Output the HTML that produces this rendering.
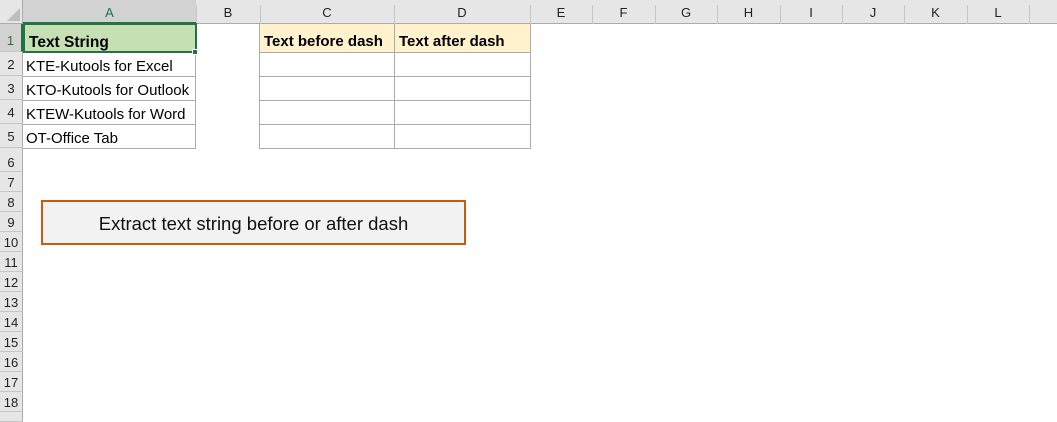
<!DOCTYPE html><html><head><style>
body{margin:0;width:1057px;height:413px;background:#fff;position:relative;overflow:hidden;font-family:"Liberation Sans",Arial,sans-serif}
.a{position:absolute;box-sizing:border-box}
.ch{top:0;height:24px;background:#e6e6e6;border-bottom:1px solid #ababab;font-size:13px;color:#222;text-align:center;line-height:26px}
.sep{position:absolute;top:5px;width:1px;height:19px;background:#c6c6c6}
.rh{left:0;width:23px;background:#e6e6e6;border-right:1px solid #ababab;border-bottom:1px solid #c6c6c6;font-size:13px;color:#222;text-align:center}
.c{border:1px solid #ababab;font-size:15px;padding-left:3px;white-space:nowrap}
</style></head><body>
<div class="a ch" style="left:0;width:1057px"></div>
<div class="a" style="left:0;top:0;width:23px;height:24px;background:#e6e6e6;border-right:1px solid #ababab;border-bottom:1px solid #ababab"></div>
<svg class="a" style="left:7px;top:8px" width="14" height="14"><polygon points="13,0 13,13 0,13" fill="#bdbdbd"/></svg>
<div class="a ch" style="left:23px;width:173px;background:#d2d2d2;color:#217346;border-bottom:2px solid #217346">A</div>
<div class="a ch" style="left:196px;width:64px;background:transparent;border:none">B</div>
<div class="a ch" style="left:260px;width:134px;background:transparent;border:none">C</div>
<div class="a ch" style="left:394px;width:136px;background:transparent;border:none">D</div>
<div class="a ch" style="left:530px;width:62px;background:transparent;border:none">E</div>
<div class="a ch" style="left:592px;width:63px;background:transparent;border:none">F</div>
<div class="a ch" style="left:655px;width:62px;background:transparent;border:none">G</div>
<div class="a ch" style="left:717px;width:63px;background:transparent;border:none">H</div>
<div class="a ch" style="left:780px;width:62px;background:transparent;border:none">I</div>
<div class="a ch" style="left:842px;width:62px;background:transparent;border:none">J</div>
<div class="a ch" style="left:904px;width:63px;background:transparent;border:none">K</div>
<div class="a ch" style="left:967px;width:62px;background:transparent;border:none">L</div>
<div class="sep" style="left:196px"></div><div class="sep" style="left:260px"></div><div class="sep" style="left:394px"></div><div class="sep" style="left:530px"></div><div class="sep" style="left:592px"></div><div class="sep" style="left:655px"></div><div class="sep" style="left:717px"></div><div class="sep" style="left:780px"></div><div class="sep" style="left:842px"></div><div class="sep" style="left:904px"></div><div class="sep" style="left:967px"></div><div class="sep" style="left:1029px"></div>

<div class="a rh" style="top:24px;height:28px;line-height:34px;background:#d2d2d2;color:#217346;border-right:2px solid #217346">1</div>
<div class="a rh" style="top:52px;height:24px;line-height:26px">2</div>
<div class="a rh" style="top:76px;height:24px;line-height:26px">3</div>
<div class="a rh" style="top:100px;height:24px;line-height:26px">4</div>
<div class="a rh" style="top:124px;height:24px;line-height:26px">5</div>
<div class="a rh" style="top:148px;height:24px;line-height:30px">6</div>
<div class="a rh" style="top:172px;height:20px;line-height:22px">7</div>
<div class="a rh" style="top:192px;height:20px;line-height:22px">8</div>
<div class="a rh" style="top:212px;height:20px;line-height:22px">9</div>
<div class="a rh" style="top:232px;height:20px;line-height:22px">10</div>
<div class="a rh" style="top:252px;height:20px;line-height:22px">11</div>
<div class="a rh" style="top:272px;height:20px;line-height:22px">12</div>
<div class="a rh" style="top:292px;height:20px;line-height:22px">13</div>
<div class="a rh" style="top:312px;height:20px;line-height:22px">14</div>
<div class="a rh" style="top:332px;height:20px;line-height:22px">15</div>
<div class="a rh" style="top:352px;height:20px;line-height:22px">16</div>
<div class="a rh" style="top:372px;height:20px;line-height:22px">17</div>
<div class="a rh" style="top:392px;height:20px;line-height:22px">18</div>
<div class="a rh" style="top:412px;height:10px"></div>

<div class="a c" style="left:195px;top:51px;width:1px;height:98px;border:none;background:#ababab;padding:0"></div>
<div class="a c" style="left:23px;top:52px;width:173px;height:25px;line-height:28px;border-left:none">KTE-Kutools for Excel</div>
<div class="a c" style="left:23px;top:76px;width:173px;height:25px;line-height:28px;border-left:none">KTO-Kutools for Outlook</div>
<div class="a c" style="left:23px;top:100px;width:173px;height:25px;line-height:28px;border-left:none">KTEW-Kutools for Word</div>
<div class="a c" style="left:23px;top:124px;width:173px;height:25px;line-height:28px;border-left:none">OT-Office Tab</div>
<div class="a" style="left:23px;top:23px;width:174px;height:30px;background:#c6e0b4;border:2px solid #217346;font-weight:bold;font-size:15.5px;padding-left:4px;line-height:36px">Text String</div>
<div class="a" style="left:192px;top:49px;width:6px;height:6px;background:#217346;border:1px solid #fff"></div>

<div class="a c" style="left:259px;top:24px;width:136px;height:29px;background:#fff2cc;font-weight:bold;line-height:36px;padding-left:4px;border-top:none">Text before dash</div>
<div class="a c" style="left:394px;top:24px;width:137px;height:29px;background:#fff2cc;font-weight:bold;line-height:36px;padding-left:4px;border-top:none">Text after dash</div>
<div class="a c" style="left:259px;top:52px;width:136px;height:25px"></div><div class="a c" style="left:394px;top:52px;width:137px;height:25px"></div>
<div class="a c" style="left:259px;top:76px;width:136px;height:25px"></div><div class="a c" style="left:394px;top:76px;width:137px;height:25px"></div>
<div class="a c" style="left:259px;top:100px;width:136px;height:25px"></div><div class="a c" style="left:394px;top:100px;width:137px;height:25px"></div>
<div class="a c" style="left:259px;top:124px;width:136px;height:25px"></div><div class="a c" style="left:394px;top:124px;width:137px;height:25px"></div>

<div class="a" style="left:41px;top:200px;width:425px;height:45px;background:#f2f2f2;border:2px solid #c55a11;font-size:18.5px;text-align:center;line-height:43px;color:#111">Extract text string before or after dash</div>
</body></html>
